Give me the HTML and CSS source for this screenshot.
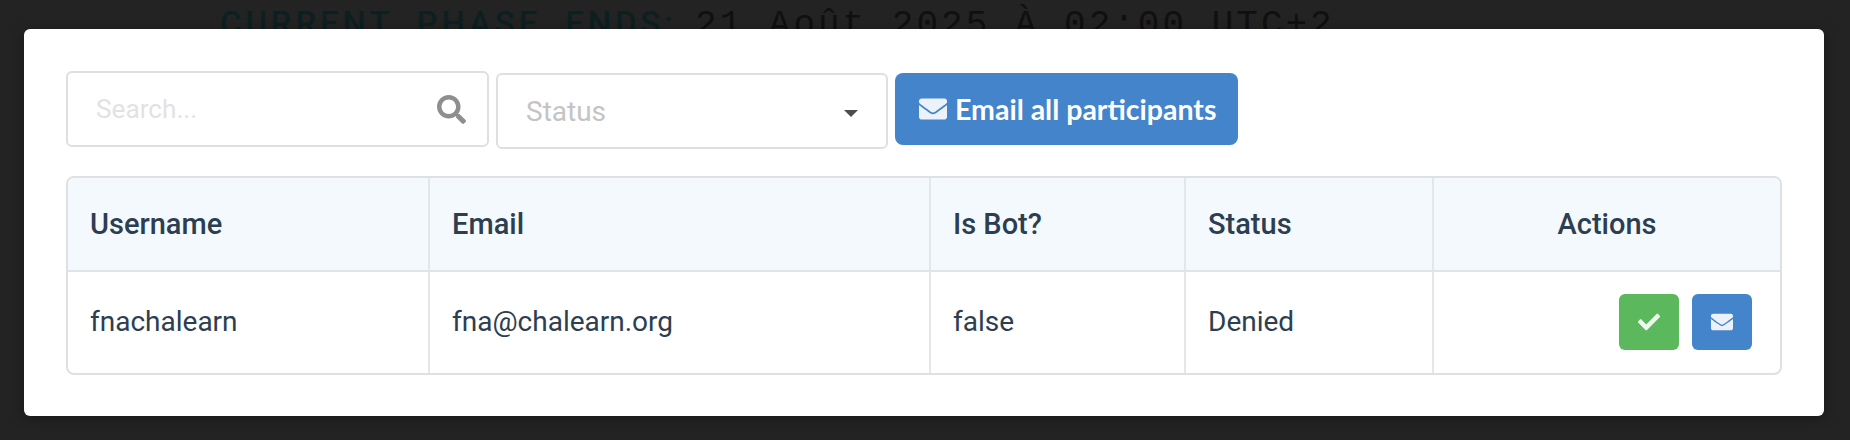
FILE: index.html
```html
<!DOCTYPE html>
<html lang="en">
<head>
<meta charset="UTF-8">
<meta name="viewport" content="width=device-width, initial-scale=1.0">
<title>Participants</title>
<link rel="stylesheet" href="styles.css">
</head>
<body>
<div class="phase-line"><span class="phase-label">CURRENT PHASE ENDS:</span><span class="phase-date">21 Août 2025 À 02:00 UTC+2</span></div>

<div class="modal">
  <div class="toolbar">
    <div class="search-box">
      <input type="text" placeholder="Search...">
      <svg class="search-icon" viewBox="0 0 512 512"><path d="M505 442.7L405.3 343c-4.5-4.5-10.6-7-17-7H372c27.6-35.3 44-79.7 44-128C416 93.1 322.9 0 208 0S0 93.1 0 208s93.1 208 208 208c48.3 0 92.7-16.4 128-44v16.3c0 6.4 2.5 12.5 7 17l99.7 99.7c9.4 9.4 24.6 9.4 33.9 0l28.3-28.3c9.4-9.4 9.4-24.6.1-34zM208 336c-70.7 0-128-57.2-128-128 0-70.7 57.2-128 128-128 70.7 0 128 57.2 128 128 0 70.7-57.2 128-128 128z"/></svg>
    </div>
    <div class="status-select">
      <span>Status</span>
      <i class="caret"></i>
    </div>
    <button class="email-all">
      <svg class="envelope" viewBox="0 0 512 512"><path d="M502.3 190.8c3.9-3.1 9.7-.2 9.7 4.7V400c0 26.5-21.5 48-48 48H48c-26.5 0-48-21.5-48-48V195.6c0-5 5.7-7.8 9.7-4.7 22.4 17.4 52.1 39.5 154.1 113.6 21.1 15.4 56.7 47.8 92.2 47.6 35.7.3 72-32.8 92.3-47.6 102-74.1 131.6-96.3 154-113.7zM256 320c23.2.4 56.6-29.2 73.4-41.4 132.7-96.3 142.8-104.7 173.4-128.7 5.8-4.5 9.2-11.5 9.2-18.9v-19c0-26.5-21.5-48-48-48H48C21.5 64 0 85.5 0 112v19c0 7.4 3.4 14.3 9.2 18.9 30.6 23.9 40.7 32.4 173.4 128.7 16.8 12.2 50.2 41.8 73.4 41.4z"/></svg>
      Email all participants
    </button>
  </div>

  <div class="table-wrap">
    <table class="participants">
      <thead>
        <tr>
          <th class="col-user">Username</th>
          <th class="col-email">Email</th>
          <th class="col-bot">Is Bot?</th>
          <th class="col-status">Status</th>
          <th class="col-actions">Actions</th>
        </tr>
      </thead>
      <tbody>
        <tr>
          <td>fnachalearn</td>
          <td>fna@chalearn.org</td>
          <td>false</td>
          <td>Denied</td>
          <td>
            <div class="actions">
              <button class="icon-btn green">
                <svg class="check" viewBox="0 0 512 512"><path d="M173.898 439.404l-166.4-166.4c-9.997-9.997-9.997-26.206 0-36.204l36.203-36.204c9.997-9.998 26.207-9.998 36.204 0L192 312.69 432.095 72.596c9.997-9.997 26.207-9.997 36.204 0l36.203 36.204c9.997 9.997 9.997 26.206 0 36.204l-294.4 294.401c-9.998 9.997-26.207 9.997-36.204-.001z"/></svg>
              </button>
              <button class="icon-btn blue">
                <svg class="envelope small" viewBox="0 0 512 512"><path d="M502.3 190.8c3.9-3.1 9.7-.2 9.7 4.7V400c0 26.5-21.5 48-48 48H48c-26.5 0-48-21.5-48-48V195.6c0-5 5.7-7.8 9.7-4.7 22.4 17.4 52.1 39.5 154.1 113.6 21.1 15.4 56.7 47.8 92.2 47.6 35.7.3 72-32.8 92.3-47.6 102-74.1 131.6-96.3 154-113.7zM256 320c23.2.4 56.6-29.2 73.4-41.4 132.7-96.3 142.8-104.7 173.4-128.7 5.8-4.5 9.2-11.5 9.2-18.9v-19c0-26.5-21.5-48-48-48H48C21.5 64 0 85.5 0 112v19c0 7.4 3.4 14.3 9.2 18.9 30.6 23.9 40.7 32.4 173.4 128.7 16.8 12.2 50.2 41.8 73.4 41.4z"/></svg>
              </button>
            </div>
          </td>
        </tr>
      </tbody>
    </table>
  </div>
</div>
</body>
</html>
```

FILE: styles.css
```css
html, body {
  height: 100%;
}

body {
  margin: 0;
  background: #232323;
  overflow: hidden;
  font-family: 'Roboto', sans-serif;
  color: #2c3e50;
}

/* page text behind the dimmer */
.phase-line {
  padding: 3px 0 0 220px;
  font-family: 'Liberation Mono', monospace;
  font-size: 36px;
  line-height: 42px;
  letter-spacing: 3px;
  white-space: nowrap;
}

.phase-label {
  display: inline-block;
  width: 475px;
  font-family: 'Roboto', sans-serif;
  font-weight: 500;
  font-size: 33px;
  letter-spacing: 3.85px;
  word-spacing: 12px;
  color: #0d1f20;
}

.phase-date {
  color: #101010;
}

/* modal */
.modal {
  position: absolute;
  left: 24px;
  top: 29px;
  width: 1800px;
  height: 387px;
  box-sizing: border-box;
  padding: 42px 42px 0;
  background: #fff;
  border-radius: 6px;
  box-shadow: 0 2px 12px rgba(0,0,0,0.35);
}

.toolbar {
  display: flex;
  align-items: flex-start;
  gap: 7px;
  height: 105px;
}

.search-box {
  position: relative;
  width: 423px;
  height: 76px;
  box-sizing: border-box;
  border: 2px solid #dfdfdf;
  border-radius: 6px;
}

.search-box input {
  width: 100%;
  height: 100%;
  box-sizing: border-box;
  padding: 0 70px 0 28px;
  border: 0;
  outline: 0;
  background: transparent;
  border-radius: 6px;
  font-family: 'Roboto', sans-serif;
  font-size: 26.2px;
}

.search-box input::placeholder {
  color: #e2e2e2;
  opacity: 1;
}

.search-icon {
  position: absolute;
  right: 21px;
  top: 22px;
  width: 29px;
  height: 29px;
  fill: #8e8e8e;
}

.status-select {
  display: flex;
  align-items: center;
  justify-content: space-between;
  width: 392px;
  height: 76px;
  box-sizing: border-box;
  margin-top: 2px;
  padding: 0 28px;
  border: 2px solid #dfdfdf;
  border-radius: 6px;
  font-size: 28px;
  color: #c4c4c4;
}

.caret {
  width: 0;
  height: 0;
  margin-top: 4px;
  border-left: 7px solid transparent;
  border-right: 7px solid transparent;
  border-top: 7px solid #4d4d4d;
}

.email-all {
  display: flex;
  align-items: center;
  gap: 8px;
  width: 343px;
  height: 72px;
  margin-top: 2px;
  padding: 0 0 0 24px;
  border: 0;
  border-radius: 8px;
  background: #4384cb;
  color: #fff;
  font-family: 'Lato', sans-serif;
  font-weight: 700;
  font-size: 28.5px;
  cursor: pointer;
}

.envelope {
  width: 28px;
  height: 28px;
  fill: #fff;
  opacity: 0.9;
}

.envelope.small {
  width: 22px;
  height: 22px;
}

/* table */
.table-wrap {
  width: 1716px;
  box-sizing: border-box;
  border: 2px solid #dfe0e1;
  border-radius: 8px;
  overflow: hidden;
}

.participants {
  width: 100%;
  border-collapse: collapse;
  table-layout: fixed;
  font-size: 28px;
}

.participants th,
.participants td {
  box-sizing: border-box;
  padding: 0 22px;
  text-align: left;
  border-left: 2px solid #e4e6e8;
}

.participants th:first-child,
.participants td:first-child {
  border-left: 0;
}

.participants th {
  height: 93px;
  background: #f4f9fe;
  font-weight: 500;
  font-size: 29px;
  border-bottom: 2px solid #e0e4e8;
}

.participants td {
  height: 102px;
  padding-bottom: 2px;
  font-weight: 400;
}

.participants th.col-actions {
  text-align: center;
}

.col-user { width: 361px; }
.col-email { width: 501px; }
.col-bot { width: 255px; }
.col-status { width: 248px; }

.actions {
  display: flex;
  justify-content: flex-end;
  gap: 13px;
  padding-right: 6px;
}

.icon-btn {
  display: flex;
  align-items: center;
  justify-content: center;
  flex: none;
  width: 60px;
  height: 56px;
  padding: 0;
  border: 0;
  border-radius: 6px;
  cursor: pointer;
}

.icon-btn.green { background: #5cb85c; }
.icon-btn.blue { background: #4384cb; }

.check {
  width: 22px;
  height: 22px;
  fill: #fff;
  opacity: 0.9;
}
```
